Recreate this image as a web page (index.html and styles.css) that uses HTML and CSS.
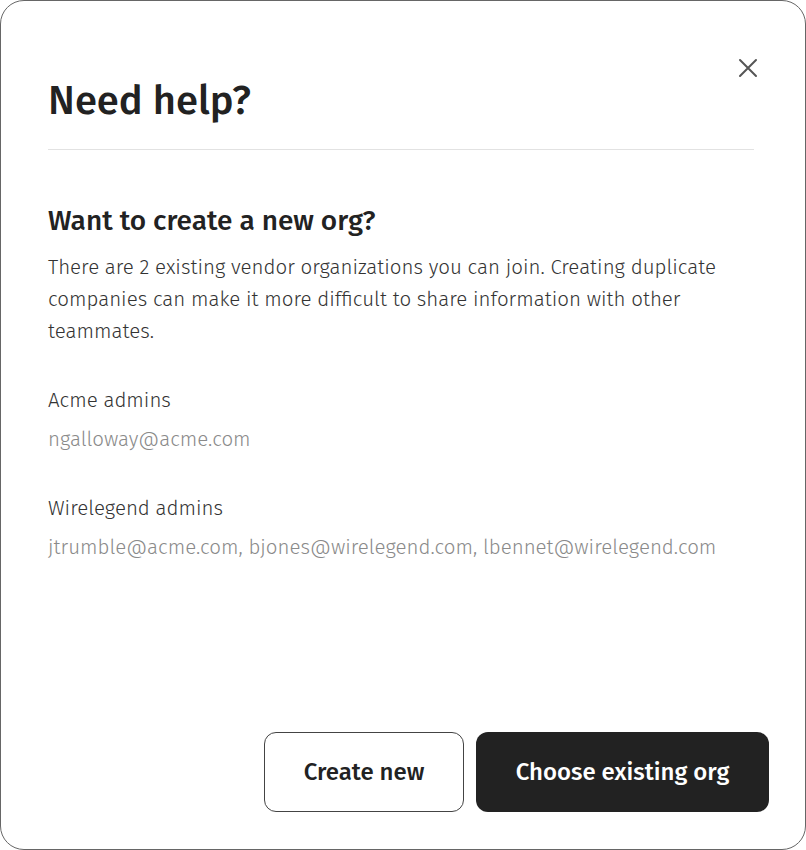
FILE: index.html
```html
<!DOCTYPE html>
<html>
<head>
  <meta name="viewport" content="width=device-width, initial-scale=1">
  <link rel="stylesheet" href="styles.css">
</head>
<body>
  <div class="modal">
    <div class="modal-header">
      <h1>Need help?</h1>
      <button class="close" aria-label="Close">
        <svg width="20" height="20" viewBox="0 0 20 20"><path d="M2 2L18 18M18 2L2 18" stroke="#555" stroke-width="2" stroke-linecap="round"/></svg>
      </button>
    </div>
    <div class="modal-body">
      <h2>Want to create a new org?</h2>
      <p class="intro">There are 2 existing vendor organizations you can join. Creating duplicate companies can make it more difficult to share information with other teammates.</p>
      <div class="org">
        <div class="org-name">Acme admins</div>
        <div class="org-emails">ngalloway@acme.com</div>
      </div>
      <div class="org">
        <div class="org-name">Wirelegend admins</div>
        <div class="org-emails">jtrumble@acme.com, bjones@wirelegend.com, lbennet@wirelegend.com</div>
      </div>
    </div>
    <div class="modal-footer">
      <button class="btn btn-outline">Create new</button>
      <button class="btn btn-dark">Choose existing org</button>
    </div>
  </div>
</body>
</html>
```

FILE: styles.css
```css
body {
  font-family: "Fira Sans", Lato, "Noto Sans", sans-serif;
  margin: 0;
  padding: 0;
  color: #222;
}
.modal {
  box-sizing: border-box;
  width: 806px;
  height: 850px;
  border: 1px solid #666;
  border-radius: 24px;
  background: #fff;
  display: flex;
  flex-direction: column;
  padding: 0 36px 37px 47px;
}
.modal-header {
  position: relative;
  margin-right: 15px;
  border-bottom: 1px solid #e2e2e2;
  padding-top: 78px;
  padding-bottom: 26px;
}
h1 {
  margin: 0;
  font-size: 40px;
  line-height: 44px;
  font-weight: 500;
}
.close {
  position: absolute;
  top: 57px;
  right: -4px;
  background: none;
  border: none;
  padding: 0;
  cursor: pointer;
}
.modal-body {
  flex: 1;
  padding-top: 53px;
}
h2 {
  margin: 0;
  font-size: 28px;
  line-height: 36px;
  font-weight: 500;
}
.intro, .org-name, .org-emails {
  font-size: 20.5px;
  line-height: 32px;
  font-weight: 300;
}
.intro {
  margin: 12px 0 0;
  padding-right: 20px;
  color: #333;
}
.org {
  margin-top: 37px;
}
.org-name {
  color: #333;
}
.org-emails {
  margin-top: 7px;
  color: #8a8a8a;
}
.modal-footer {
  display: flex;
  justify-content: flex-end;
  gap: 12px;
}
.btn {
  font-family: inherit;
  height: 80px;
  border-radius: 12px;
  font-size: 24px;
  font-weight: 500;
  cursor: pointer;
}
.btn-outline {
  width: 200px;
  background: #fff;
  color: #222;
  border: 1px solid #444;
}
.btn-dark {
  width: 293px;
  background: #222;
  color: #fff;
  border: none;
}
```
